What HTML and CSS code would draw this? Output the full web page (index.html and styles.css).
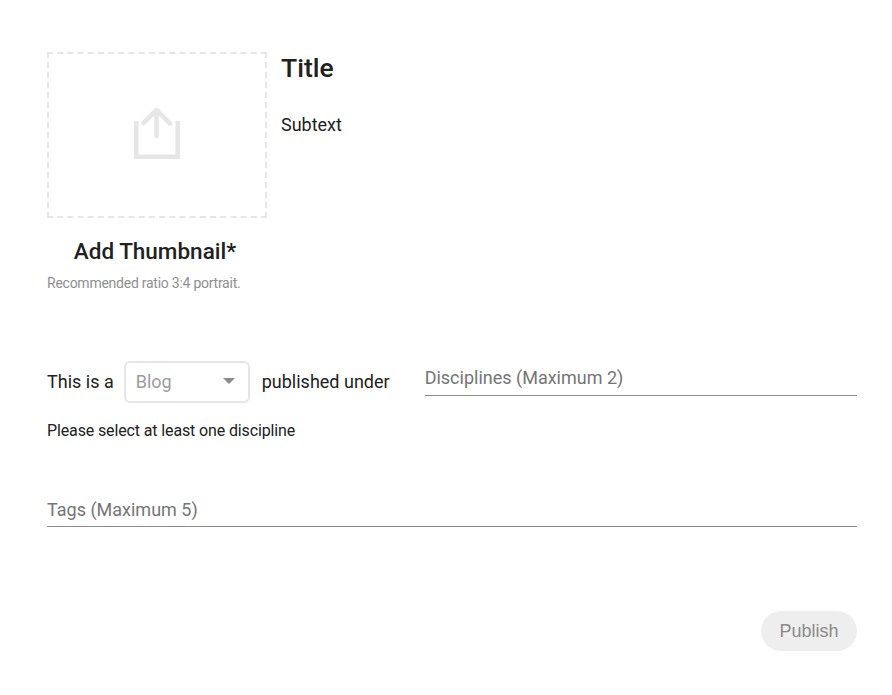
FILE: index.html
```html
<!DOCTYPE html>
<html lang="en">
<head>
<meta charset="utf-8">
<title>Publish</title>
<link rel="stylesheet" href="styles.css">
</head>
<body>
<main class="page">
  <section class="top">
    <div class="thumb-col">
      <div class="dropzone">
        <svg class="upload" width="46" height="52" viewBox="0 0 46 52" fill="none" stroke="#e6e6e6" stroke-width="4.6" stroke-linecap="round">
          <path d="M2.3 13V48.7H43.7V13" stroke-linecap="butt" stroke-linejoin="miter"/>
          <path d="M22.5 28V2L36 15.5M22.5 2L9.5 15" stroke-linejoin="round"/>
        </svg>
      </div>
      <h2 class="thumb-title">Add Thumbnail*</h2>
      <p class="thumb-note">Recommended ratio 3:4 portrait.</p>
    </div>
    <div class="info">
      <h1 class="title">Title</h1>
      <p class="subtext">Subtext</p>
    </div>
  </section>
  <section class="meta">
    <div class="meta-row">
      <span class="label">This is a</span>
      <div class="select"><span>Blog</span><i class="caret"></i></div>
      <span class="label">published under</span>
      <div class="field field-disc">Disciplines (Maximum 2)</div>
    </div>
    <p class="hint">Please select at least one discipline</p>
    <div class="field field-tags">Tags (Maximum 5)</div>
  </section>
  <div class="actions"><button class="publish" type="button">Publish</button></div>
</main>
</body>
</html>
```
FILE: styles.css
```css
* { box-sizing: border-box; }
html, body { margin: 0; padding: 0; background: #fff; }
body { font-family: Roboto, sans-serif; color: #212121; }
.page { padding: 52px 35px 0 47px; }
.top { display: flex; gap: 14px; align-items: flex-start; }
.thumb-col { width: 220px; }
.dropzone {
  height: 166px;
  padding-bottom: 2px;
  border: 2px dashed #e6e6e6;
  display: flex;
  align-items: center;
  justify-content: center;
}
.thumb-title {
  margin: 19px -4px 0 -8px;
  font-size: 22.5px;
  line-height: 28px;
  font-weight: 500;
  text-align: center;
}
.thumb-note {
  margin: 9px -30px 0 0;
  font-size: 14px;
  line-height: 18px;
  letter-spacing: -0.25px;
  color: #8f8f8f;
}
.title { margin: 0; font-size: 26.5px; line-height: 32px; font-weight: 500; }
.subtext { margin: 29px 0 0; font-size: 18px; line-height: 24px; letter-spacing: -0.02px; }
.meta { margin-top: 69px; }
.meta-row { display: flex; align-items: center; height: 42px; }
.label { font-size: 18px; line-height: 24px; }
.select {
  width: 126px;
  height: 42px;
  margin: 0 12px 0 10px;
  padding: 0 13px 2px 10px;
  border: 2px solid #e6e6e6;
  border-radius: 6px;
  display: flex;
  align-items: center;
  justify-content: space-between;
  font-size: 18px;
  color: #9b9b9b;
}
.caret {
  width: 0;
  height: 0;
  border-left: 6.5px solid transparent;
  border-right: 6.5px solid transparent;
  border-top: 6px solid #8a8a8a;
}
.field {
  font-size: 18px;
  line-height: 24px;
  color: #757575;
  border-bottom: 1px solid #8c8c8c;
}
.field-disc { flex: 1; margin: -2px 0 0 35px; padding: 0 0 5px; }
.hint { margin: 17px 0 0; font-size: 16px; line-height: 22px; letter-spacing: -0.13px; }
.field-tags { margin-top: 56px; padding-bottom: 4px; }
.actions { display: flex; justify-content: flex-end; margin-top: 84px; }
.publish {
  width: 96px;
  height: 40px;
  border: 0;
  border-radius: 20px;
  background: #eeeeee;
  color: #8a8a8a;
  font-family: "Liberation Sans", Arial, sans-serif;
  font-size: 18px;
  padding: 0;
}
```
